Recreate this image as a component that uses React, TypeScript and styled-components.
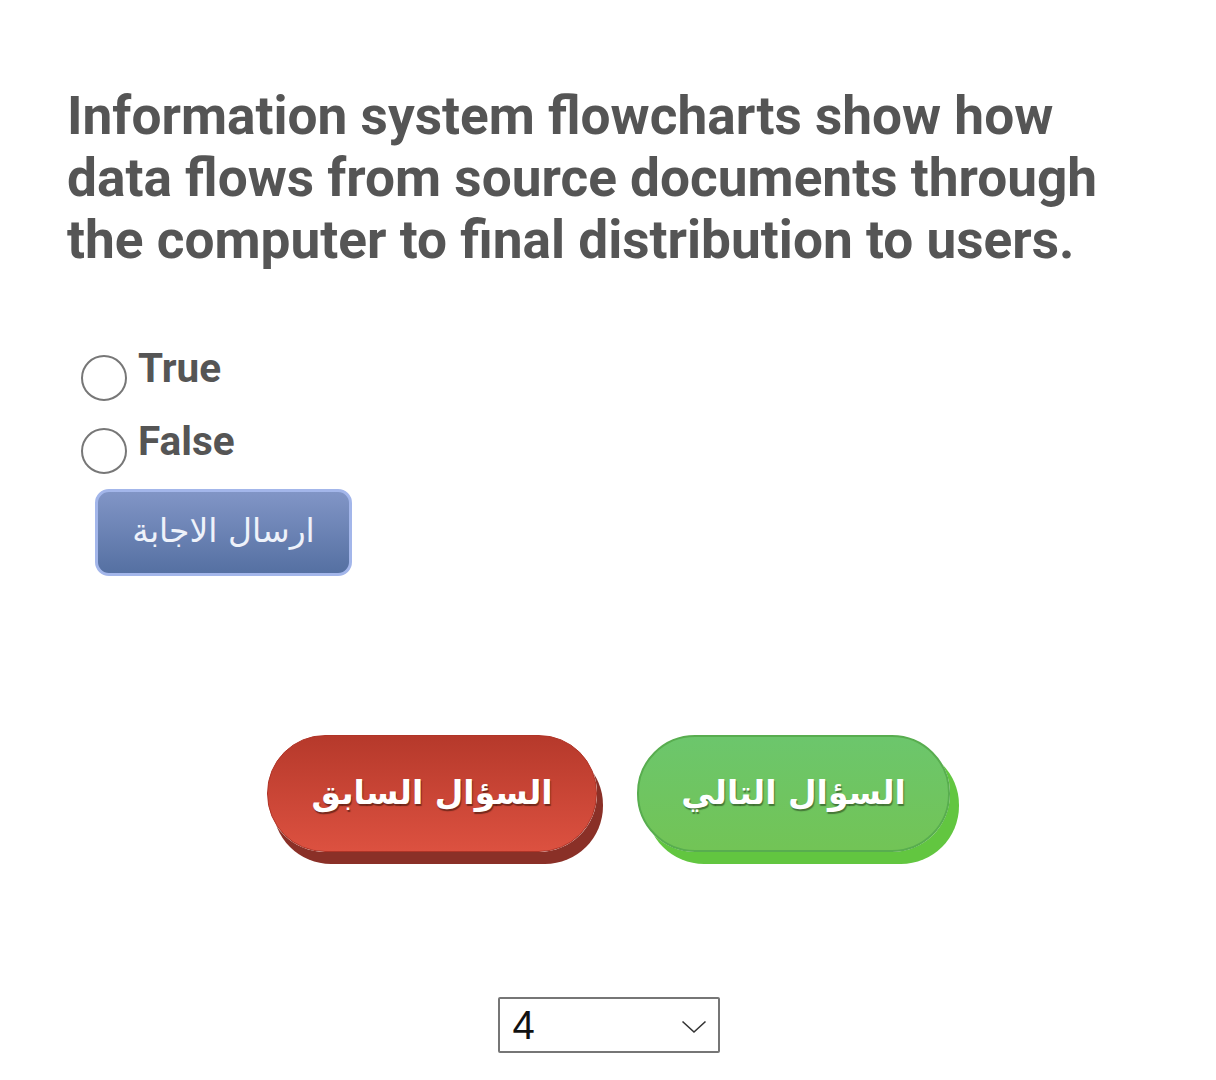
import React from "react";
import styled, { createGlobalStyle } from "styled-components";

const Global = createGlobalStyle`
  html, body { margin: 0; padding: 0; background: #fff; }
  body { font-family: Roboto, "Liberation Sans", sans-serif; }
`;

const Page = styled.div`
  padding: 85px 66px 0 67px;
  display: flex;
  flex-direction: column;
`;

const Question = styled.h1`
  margin: 0;
  max-width: 1060px;
  font-family: Roboto, "Liberation Sans", sans-serif;
  font-weight: 700;
  font-size: 53.2px;
  line-height: 62px;
  color: #555555;
`;

const Options = styled.div`
  margin-top: 80px;
  display: flex;
  flex-direction: column;
  gap: 27px;
  padding-left: 14px;
`;

const Option = styled.label`
  display: flex;
  align-items: center;
  gap: 11px;
  height: 46px;
  font-size: 40.5px;
  font-weight: 700;
  color: #555;
`;

const Radio = styled.span`
  width: 46px;
  height: 46px;
  border-radius: 50%;
  border: 2.5px solid #777;
  box-sizing: border-box;
  flex: none;
  margin-top: 8px;
`;

const OptionText = styled.span`
  margin-top: -12px;
`;

const Submit = styled.button`
  margin-top: 19px;
  margin-left: 28px;
  width: 257px;
  height: 87px;
  border-radius: 14px;
  border: 3px solid #a3b6ea;
  background: linear-gradient(#8195c6, #5570a2);
  color: #eef2fa;
  font-family: "DejaVu Sans", "Noto Sans", sans-serif;
  font-size: 33px;
  direction: rtl;
  align-self: flex-start;
  box-sizing: border-box;
  padding: 0 0 4px;
`;

const NavRow = styled.div`
  margin-top: 159px;
  display: flex;
  justify-content: center;
  gap: 40px;
`;

const NavButton = styled.button<{ $variant: "red" | "green" }>`
  height: 117px;
  border-radius: 58px;
  font-family: "DejaVu Sans", "Noto Sans", sans-serif;
  font-weight: 700;
  font-size: 33px;
  color: #fff;
  direction: rtl;
  box-sizing: border-box;
  padding: 0 0 2px;
  ${({ $variant }) =>
    $variant === "red"
      ? `
    width: 330px;
    background: linear-gradient(#b6392b, #dc5140);
    border: 1px solid #b03427;
    box-shadow: 6px 12px 0 #8a3027;
    text-shadow: 1px 2px 1px rgba(60, 20, 10, 0.6);
  `
      : `
    width: 313px;
    background: linear-gradient(#6cc66c, #72c456);
    border: 2px solid #58ad4f;
    box-shadow: 9px 12px 0 #62c640;
    text-shadow: 1px 2px 1px rgba(40, 70, 30, 0.6);
  `}
`;

const SelectWrap = styled.div`
  margin-top: 145px;
  display: flex;
  justify-content: center;
`;

const SelectBox = styled.div`
  width: 222px;
  height: 56px;
  box-sizing: border-box;
  border: 2px solid #767676;
  border-radius: 2px;
  display: flex;
  align-items: center;
  justify-content: space-between;
  padding: 0 11px 0 13px;
  font-family: "Liberation Sans", Arial, sans-serif;
  font-size: 40px;
  color: #111;
`;

const Chevron = styled.svg`
  margin-top: 4px;
`;

export default function App() {
  return (
    <>
      <Global />
      <Page>
        <Question>
          Information system flowcharts show how data flows from source
          documents through the computer to final distribution to users.
        </Question>
        <Options>
          <Option>
            <Radio />
            <OptionText>True</OptionText>
          </Option>
          <Option>
            <Radio />
            <OptionText>False</OptionText>
          </Option>
        </Options>
        <Submit>ارسال الاجابة</Submit>
        <NavRow>
          <NavButton $variant="red">السؤال السابق</NavButton>
          <NavButton $variant="green">السؤال التالي</NavButton>
        </NavRow>
        <SelectWrap>
          <SelectBox>
            <span>4</span>
            <Chevron width="26" height="16" viewBox="0 0 26 16" fill="none">
              <path d="M1.5 2.5 L13 13 L24.5 2.5" stroke="#333" strokeWidth="1.6" />
            </Chevron>
          </SelectBox>
        </SelectWrap>
      </Page>
    </>
  );
}
